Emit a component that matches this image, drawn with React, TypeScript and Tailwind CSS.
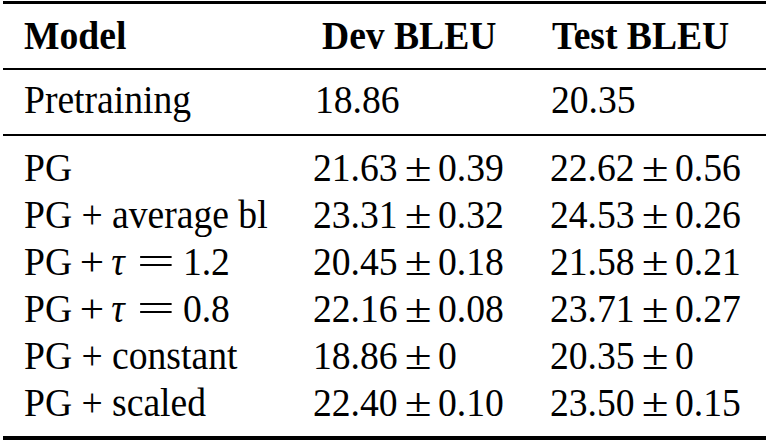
import type { ReactNode } from "react";

// text in the picture is a bit narrower than Times, squeeze it
function Sx({ children, className = "" }: { children: ReactNode; className?: string }) {
  return (
    <span className={`inline-block origin-left scale-x-[0.94] whitespace-nowrap ${className}`}>
      {children}
    </span>
  );
}

function PM({ a, b }: { a: string; b: string }) {
  return (
    <Sx>
      {a}
      <span className="ml-[11px] mr-[10px] inline-block scale-x-[1.3]">±</span>
      {b}
    </Sx>
  );
}

function Tau({ v }: { v: string }) {
  return (
    <Sx>
      PG<span className="ml-[10px] inline-block scale-x-[1.15]">+</span>
      <span className="ml-[9px] italic">τ</span>
      <span className="ml-[13px] inline-block w-[40px] text-center">
        <span className="inline-block scale-x-[1.8]">=</span>
      </span>
      <span className="ml-[9px]">{v}</span>
    </Sx>
  );
}

const rows: { model: ReactNode; dev: [string, string]; test: [string, string] }[] = [
  { model: <Sx>PG</Sx>, dev: ["21.63", "0.39"], test: ["22.62", "0.56"] },
  { model: <Sx>PG + average bl</Sx>, dev: ["23.31", "0.32"], test: ["24.53", "0.26"] },
  { model: <Tau v="1.2" />, dev: ["20.45", "0.18"], test: ["21.58", "0.21"] },
  { model: <Tau v="0.8" />, dev: ["22.16", "0.08"], test: ["23.71", "0.27"] },
  { model: <Sx>PG + constant</Sx>, dev: ["18.86", "0"], test: ["20.35", "0"] },
  { model: <Sx>PG + scaled</Sx>, dev: ["22.40", "0.10"], test: ["23.50", "0.15"] },
];

const rowCls = "grid grid-cols-[291px_236px_1fr] pl-[24px] h-[47px] leading-[47px]";

export default function App() {
  return (
    <div
      className="w-[769px] h-[443px] bg-white text-black text-[40px] overflow-hidden"
      style={{ fontFamily: '"Liberation Serif", "Times New Roman", serif' }}
    >
      {/* top rule */}
      <div className="mx-[3px] mt-px h-[3px] bg-black" />

      {/* header */}
      <div className="pt-[8px] pb-[9px]">
        <div className={`${rowCls} font-bold`}>
          <div>
            <Sx>Model</Sx>
          </div>
          <div className="pl-[7px]">
            <Sx>Dev BLEU</Sx>
          </div>
          <div className="pl-px">
            <Sx>Test BLEU</Sx>
          </div>
        </div>
      </div>

      <div className="mx-[3px] h-[2px] bg-black" />

      {/* baseline */}
      <div className="pt-[6px] pb-[11px]">
        <div className={rowCls}>
          <div>
            <Sx>Pretraining</Sx>
          </div>
          <div>
            <Sx>18.86</Sx>
          </div>
          <div>
            <Sx>20.35</Sx>
          </div>
        </div>
      </div>

      <div className="mx-[3px] h-[2px] bg-black" />

      {/* PG variants */}
      <div className="pt-[8px] pb-[10px]">
        {rows.map((r, i) => (
          <div key={i} className={rowCls}>
            <div>{r.model}</div>
            <div className="-ml-[2px]">
              <PM a={r.dev[0]} b={r.dev[1]} />
            </div>
            <div className="-ml-[1px]">
              <PM a={r.test[0]} b={r.test[1]} />
            </div>
          </div>
        ))}
      </div>

      {/* bottom rule */}
      <div className="mx-[3px] h-[4px] bg-black" />
    </div>
  );
}
